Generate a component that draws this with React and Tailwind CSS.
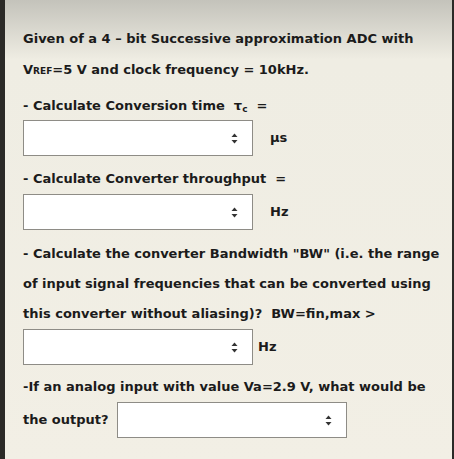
import { useState } from 'react';

function Spinner() {
  return (
    <svg width="7" height="11" viewBox="0 0 7 11" className="shrink-0">
      <path d="M3.5 0.5 L6.5 4 L0.5 4 Z" fill="#333" />
      <path d="M3.5 10.5 L6.5 7 L0.5 7 Z" fill="#333" />
    </svg>
  );
}

function Answer({ className = '' }) {
  const [val, setVal] = useState('');
  return (
    <div className={`relative w-[230px] h-[36px] bg-white border border-[#8e8c86] flex items-center ${className}`}>
      <input value={val} onChange={(e) => setVal(e.target.value)} className="flex-1 min-w-0 h-full px-2 bg-transparent outline-none" />
      <span className="mr-[14px]"><Spinner /></span>
    </div>
  );
}

export default function App() {
  return (
    <div
      className="w-[454px] h-[459px] overflow-hidden whitespace-nowrap border-l-[5px] border-r-[2px] border-[#2b2a27] bg-gradient-to-b from-[#c4c3bb] via-[#efede3] via-[13%] to-[#f2efe5] text-[#1b1b1b] font-bold text-[13px] pl-[18px] pt-[23px]"
      style={{ fontFamily: '"DejaVu Sans", sans-serif' }}
    >
      <p className="leading-[31px]">Given of a 4 – bit Successive approximation ADC with</p>
      <p className="leading-[31px]">
        V<span className="text-[9px]">REF</span>=5 V and clock frequency = 10kHz.
      </p>

      <p className="leading-[31px] mt-[3px]">
        - Calculate Conversion time&nbsp; τ<sub className="text-[9px]">c</sub>&nbsp; =
      </p>
      <div className="flex items-center -mt-[1px]">
        <Answer />
        <span className="ml-[17px]">μs</span>
      </div>

      <p className="leading-[30px] mt-[8px]">- Calculate Converter throughput&nbsp; =</p>
      <div className="flex items-center">
        <Answer />
        <span className="ml-[17px]">Hz</span>
      </div>

      <div className="leading-[30px] mt-[9px]">
        <p>- Calculate the converter Bandwidth "BW" (i.e. the range</p>
        <p>of input signal frequencies that can be converted using</p>
        <p>this converter without aliasing)?&nbsp; BW=fin,max &gt;</p>
      </div>
      <div className="flex items-center">
        <Answer />
        <span className="ml-[5px]">Hz</span>
      </div>

      <p className="leading-[30px] mt-[7px]">-If an analog input with value Va=2.9 V, what would be</p>
      <div className="flex items-center">
        <span className="w-[94px]">the output?</span>
        <Answer />
      </div>
    </div>
  );
}
